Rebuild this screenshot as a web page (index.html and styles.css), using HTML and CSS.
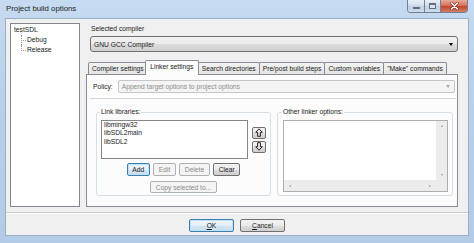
FILE: index.html
```html
<!doctype html>
<html lang="en">
<head>
    <meta charset="UTF-8">
    <title>Project build options</title>
    <link rel="stylesheet" href="styles.css">
</head>
<body>
    <div class="window">
        <div class="titlebar">
            <span class="title">Project build options</span>
            <div class="caption-buttons">
                <span class="cap-btn"><span class="glyph-min"></span></span>
                <span class="cap-btn"><span class="glyph-max"></span></span>
                <span class="cap-btn close">
                    <svg width="9" height="8" viewBox="0 0 9 8">
                        <path d="M1.5 1 L7.5 7 M7.5 1 L1.5 7" stroke="#6b2a1c" stroke-width="2.6" stroke-linecap="round"/>
                        <path d="M1.5 1 L7.5 7 M7.5 1 L1.5 7" stroke="#fff" stroke-width="1.5" stroke-linecap="round"/>
                    </svg>
                </span>
            </div>
        </div>

        <div class="client">
            <div class="main">
                <div class="tree">
                    <div class="tree-root">testSDL</div>
                    <ul class="tree-children">
                        <li>Debug</li>
                        <li>Release</li>
                    </ul>
                </div>

                <div class="settings">
                    <div class="field-label">Selected compiler</div>
                    <div class="combo">
                        <span>GNU GCC Compiler</span>
                        <span class="combo-arrow"></span>
                    </div>

                    <div class="tabs">
                        <span class="tab">Compiler settings</span>
                        <span class="tab active">Linker settings</span>
                        <span class="tab">Search directories</span>
                        <span class="tab">Pre/post build steps</span>
                        <span class="tab">Custom variables</span>
                        <span class="tab">&quot;Make&quot; commands</span>
                    </div>

                    <div class="tab-panel">
                        <div class="policy-row">
                            <span>Policy:</span>
                            <div class="combo disabled">
                                <span>Append target options to project options</span>
                                <span class="combo-arrow"></span>
                            </div>
                        </div>
                        <div class="panel-separator"></div>

                        <div class="groups">
                            <fieldset class="group libs">
                                <legend>Link libraries:</legend>
                                <div class="list-row">
                                    <div class="listbox">
                                        <div>libmingw32</div>
                                        <div>libSDL2main</div>
                                        <div>libSDL2</div>
                                    </div>
                                    <div class="order-buttons">
                                        <span class="btn arrow-btn">
                                            <svg width="8" height="9" viewBox="0 0 8 9"><path d="M4 0.8 L7.3 4.3 H5.4 V8.3 H2.6 V4.3 H0.7 Z" fill="none" stroke="#111" stroke-width="0.9"/></svg>
                                        </span>
                                        <span class="btn arrow-btn">
                                            <svg width="8" height="9" viewBox="0 0 8 9"><path d="M4 8.2 L7.3 4.7 H5.4 V0.7 H2.6 V4.7 H0.7 Z" fill="none" stroke="#111" stroke-width="0.9"/></svg>
                                        </span>
                                    </div>
                                </div>
                                <div class="lib-buttons">
                                    <span class="btn focused">Add</span>
                                    <span class="btn disabled">Edit</span>
                                    <span class="btn disabled">Delete</span>
                                    <span class="btn">Clear</span>
                                </div>
                                <span class="btn disabled copy-btn">Copy selected to...</span>
                            </fieldset>

                            <fieldset class="group other">
                                <legend>Other linker options:</legend>
                                <div class="textbox">
                                    <div class="text-area"></div>
                                    <div class="vscroll">
                                        <span class="tri up"></span>
                                        <span class="tri down"></span>
                                    </div>
                                    <div class="hscroll">
                                        <span class="tri left"></span>
                                        <span class="tri right"></span>
                                    </div>
                                    <div class="corner"></div>
                                </div>
                            </fieldset>
                        </div>
                    </div>
                </div>
            </div>

            <div class="footer-line"></div>
            <div class="dialog-buttons">
                <span class="btn focused dlg"><u>O</u>K</span>
                <span class="btn dlg"><u>C</u>ancel</span>
            </div>
        </div>
    </div>
</body>
</html>
```

FILE: styles.css
```css
* {
    box-sizing: border-box;
}
body {
    margin: 0;
    font-family: "Liberation Sans", Arial, sans-serif;
    font-size: 6.7px;
    color: #1a1a1a;
    background: #bfd5ec;
}
.window {
    width: 474px;
    height: 243px;
    display: flex;
    flex-direction: column;
    background: linear-gradient(to bottom, #c6dbf1 0%, #b9d0e9 40%, #b3cbe6 100%);
}

/* title bar */
.titlebar {
    height: 18px;
    flex: none;
    display: flex;
    justify-content: space-between;
    align-items: flex-start;
    padding: 0 6px;
}
.title {
    font-size: 7.8px;
    line-height: 18px;
    color: #1b1b1b;
}
.caption-buttons {
    display: flex;
    height: 13px;
    border: 1px solid #6f8197;
    border-top: none;
    border-radius: 0 0 4px 4px;
    overflow: hidden;
}
.cap-btn {
    width: 16px;
    display: flex;
    align-items: center;
    justify-content: center;
    background: linear-gradient(#e7eff8, #d3dfec 45%, #c0d0e2 50%, #cddbea);
}
.cap-btn + .cap-btn {
    border-left: 1px solid #6f8197;
}
.cap-btn.close {
    width: 27px;
    background: linear-gradient(#e9a899, #d6735c 45%, #c4452c 52%, #d27d62);
}
.glyph-min {
    width: 7px;
    height: 2px;
    margin-top: 4px;
    background: #7d8da2;
    border: 1px solid #5f6f84;
}
.glyph-max {
    width: 7px;
    height: 6px;
    border: 1px solid #5f6f84;
    border-top-width: 2px;
    background: #dde6f0;
}

/* client area */
.client {
    flex: 1;
    margin: 0 5px 7px;
    background: #f0f0f0;
    border: 1px solid #9aaec5;
    display: flex;
    flex-direction: column;
}
.main {
    flex: 1;
    display: flex;
    gap: 6px;
    padding: 4px 10px 0 4px;
}
.tree {
    width: 70px;
    background: #fff;
    border: 1px solid #828790;
    padding: 1px 3px;
    line-height: 10px;
}
.tree-children {
    list-style: none;
    margin: 0 0 0 7px;
    padding: 0;
}
.tree-children li {
    position: relative;
    padding-left: 6px;
}
.tree-children li::before {
    content: "";
    position: absolute;
    left: 0;
    top: 0;
    width: 4px;
    height: 5px;
    border-left: 1px dotted #9a9a9a;
    border-bottom: 1px dotted #9a9a9a;
}
.tree-children li:not(:last-child)::after {
    content: "";
    position: absolute;
    left: 0;
    top: 5px;
    bottom: 0;
    border-left: 1px dotted #9a9a9a;
}

.settings {
    flex: 1;
    display: flex;
    flex-direction: column;
}
.field-label {
    margin: 1px 0 0 5px;
    line-height: 10px;
}
.combo {
    margin: 2px 0 0 4px;
    height: 16px;
    border: 1px solid #707070;
    border-radius: 3px;
    background: linear-gradient(#f2f2f2 0%, #ebebeb 50%, #dddddd 51%, #cfcfcf 100%);
    display: flex;
    align-items: center;
    justify-content: space-between;
    padding: 0 4px 0 3px;
}
.combo-arrow {
    width: 0;
    height: 0;
    border-left: 2.5px solid transparent;
    border-right: 2.5px solid transparent;
    border-top: 3px solid #000;
}
.combo.disabled {
    flex: 1;
    margin: 0;
    height: 13px;
    border-color: #c3c6ca;
    border-radius: 2px;
    background: #f4f4f4;
    color: #8c8c8c;
    padding: 0 4px 0 3px;
}
.combo.disabled .combo-arrow {
    border-top-color: #a9a9a9;
}

/* tabs */
.tabs {
    display: flex;
    align-items: flex-end;
    height: 14px;
    margin: 8px 0 0 2px;
    position: relative;
    z-index: 1;
}
.tab {
    height: 12px;
    line-height: 11px;
    padding: 0 3px;
    margin-right: -1px;
    border: 1px solid #898c95;
    border-bottom: none;
    border-radius: 2px 2px 0 0;
    background: linear-gradient(#f3f3f3, #e4e4e4);
}
.tab.active {
    height: 15px;
    line-height: 11px;
    margin: 0 -1px -1px -2px;
    padding: 0 4.5px;
    background: #fcfcfc;
}
.tab-panel {
    flex: 1;
    border: 1px solid #898c95;
    background: #fcfcfc;
    padding-top: 5px;
    display: flex;
    flex-direction: column;
}
.policy-row {
    display: flex;
    align-items: center;
    gap: 5px;
    padding: 0 2px 0 6px;
}
.panel-separator {
    margin: 5px 1px 0 3px;
    height: 1px;
    background: #d5d5d5;
}
.groups {
    display: flex;
    gap: 6px;
    margin-top: 9px;
    padding: 0 4px 0 9px;
}
.group {
    margin: 0;
    min-width: 0;
    padding: 4px 4px 2px;
    border: 1px solid #d5dfe5;
    border-radius: 3px;
    display: flex;
    flex-direction: column;
}
.group legend {
    padding: 0 1px;
    margin-left: -1px;
    line-height: 8px;
}
.group.libs {
    width: 175px;
}
.group.other {
    flex: 1;
    padding: 4px 4px 3px 5px;
}
.list-row {
    display: flex;
    align-items: center;
    gap: 4px;
}
.listbox {
    width: 147px;
    height: 39px;
    border: 1px solid #828790;
    background: #fff;
    padding: 0 2px;
    line-height: 8.3px;
}
.order-buttons {
    display: flex;
    flex-direction: column;
    gap: 2px;
}

/* buttons */
.btn {
    display: flex;
    align-items: center;
    justify-content: center;
    height: 13px;
    padding: 0 4.5px;
    border: 1px solid #707070;
    border-radius: 2px;
    background: linear-gradient(#f2f2f2 0%, #ebebeb 50%, #dddddd 51%, #cfcfcf 100%);
    color: #1a1a1a;
}
.btn.focused {
    border-color: #3c7fb1;
    background: linear-gradient(#eef6fc 0%, #e3eff8 50%, #d4e5f2 51%, #c9def0 100%);
    box-shadow: inset 0 0 0 1px #bfe0f6;
}
.btn.disabled {
    border-color: #adb2b5;
    background: #f4f4f4;
    color: #8a8a8a;
}
.arrow-btn {
    width: 14px;
    height: 12px;
    padding: 0;
}
.lib-buttons {
    display: flex;
    justify-content: center;
    gap: 3.5px;
    margin-top: 4px;
}
.copy-btn {
    align-self: center;
    height: 12px;
    margin-top: 5px;
    padding: 0 5px;
}

/* multiline text box with scrollbars */
.textbox {
    flex: 1;
    display: grid;
    grid-template-columns: 1fr 11px;
    grid-template-rows: 1fr 11px;
    border: 1px solid #abadb3;
    background: #fff;
}
.vscroll,
.hscroll,
.corner {
    background: #ececec;
}
.vscroll {
    display: flex;
    flex-direction: column;
    align-items: center;
    justify-content: space-between;
    padding: 4px 0;
}
.hscroll {
    display: flex;
    align-items: center;
    justify-content: space-between;
    padding: 0 5px;
}
.tri {
    width: 0;
    height: 0;
}
.tri.up {
    border-left: 1.5px solid transparent;
    border-right: 1.5px solid transparent;
    border-bottom: 2px solid #9a9a9a;
}
.tri.down {
    border-left: 1.5px solid transparent;
    border-right: 1.5px solid transparent;
    border-top: 2px solid #9a9a9a;
}
.tri.left {
    border-top: 1.5px solid transparent;
    border-bottom: 1.5px solid transparent;
    border-right: 2px solid #9a9a9a;
}
.tri.right {
    border-top: 1.5px solid transparent;
    border-bottom: 1.5px solid transparent;
    border-left: 2px solid #9a9a9a;
}

/* bottom of dialog */
.footer-line {
    margin: 5px 0 0;
    height: 2px;
    border-top: 1px solid #c9c9c9;
    border-bottom: 1px solid #fff;
}
.dialog-buttons {
    height: 21px;
    display: flex;
    justify-content: center;
    gap: 6px;
    padding-top: 5px;
}
.btn.dlg {
    width: 45px;
}
```
